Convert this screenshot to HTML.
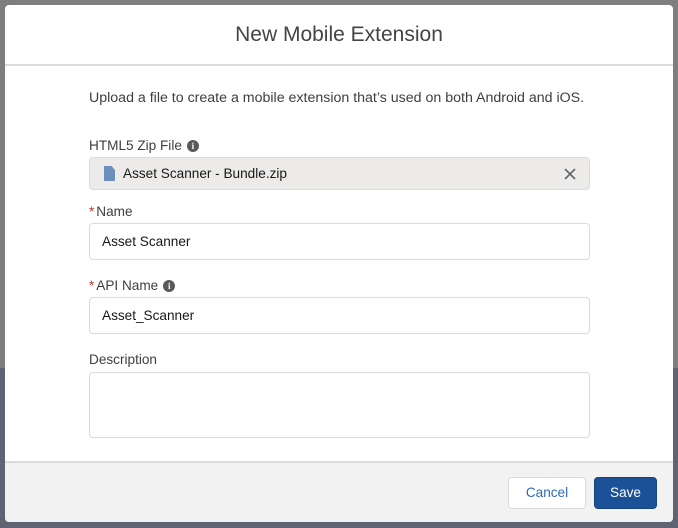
<!DOCTYPE html>
<html><head><style>
*{box-sizing:border-box;margin:0;padding:0}
body{width:678px;height:528px;overflow:hidden;background:#7e7e7e;font-family:"Liberation Sans",sans-serif;position:relative;color:#3e3e3c}
.bg2{position:absolute;left:0;top:368px;width:678px;height:160px;background:#5e6472}
.modal{position:absolute;left:5px;top:5px;width:668px;height:517px;background:#fff;border-radius:4px;overflow:hidden}
.hdr{height:61px;border-bottom:2px solid #dddbda;text-align:center;font-size:21px;line-height:60px;color:#444}
.p{position:absolute;left:84px;font-size:14.2px;white-space:nowrap}
.lbl{position:absolute;left:84px;font-size:13.6px;color:#3e3e3c}
.req{color:#c23934;margin-right:2px}
.inp{position:absolute;left:84px;width:501px;border:1px solid #dddbda;border-radius:4px;font-size:13.6px;padding-left:12px;color:#181818}
.info{display:inline-block;width:12px;height:12px;border-radius:50%;background:#5a5a5a;color:#fff;font-size:9px;line-height:12px;text-align:center;font-weight:bold;vertical-align:1px;margin-left:5px;font-family:"Liberation Serif",serif}
.ftr{position:absolute;left:0;top:456px;width:668px;height:61px;background:#f3f2f2;border-top:2px solid #dddbda}
.btn{position:absolute;top:14px;height:32px;border-radius:4px;font-size:13.6px;line-height:30px;text-align:center}
</style></head><body>
<div class="bg2"></div>
<div class="modal">
<div class="hdr">New Mobile Extension</div>
<div class="p" style="top:85px">Upload a file to create a mobile extension that’s used on both Android and iOS.</div>
<div class="lbl" style="top:133px">HTML5 Zip File<span class="info">i</span></div>
<div class="inp" style="top:152px;height:33px;background:#ecebea;line-height:31px;padding-left:14px">
<span style="display:inline-block;width:11px;height:15px;background:#6b8fbd;vertical-align:-3px;margin-right:8px;clip-path:polygon(0 0,70% 0,100% 28%,100% 100%,0 100%)"></span>Asset Scanner - Bundle.zip
<svg style="position:absolute;right:13px;top:10px" width="12" height="12" viewBox="0 0 12 12"><path d="M1 1L11 11M11 1L1 11" stroke="#666" stroke-width="1.6"/></svg></div>
<div class="lbl" style="top:199px"><span class="req">*</span>Name</div>
<div class="inp" style="top:218px;height:37px;line-height:35px">Asset Scanner</div>
<div class="lbl" style="top:273px"><span class="req">*</span>API Name<span class="info">i</span></div>
<div class="inp" style="top:292px;height:37px;line-height:35px">Asset_Scanner</div>
<div class="lbl" style="top:347px">Description</div>
<div class="inp" style="top:367px;height:66px"></div>
<div class="ftr">
<div class="btn" style="left:503px;width:78px;background:#fff;border:1px solid #dddbda;color:#2f6cb0">Cancel</div>
<div class="btn" style="left:589px;width:63px;background:#1b5297;color:#fff;border:1px solid #16447e">Save</div>
</div>
</div>
</body></html>
